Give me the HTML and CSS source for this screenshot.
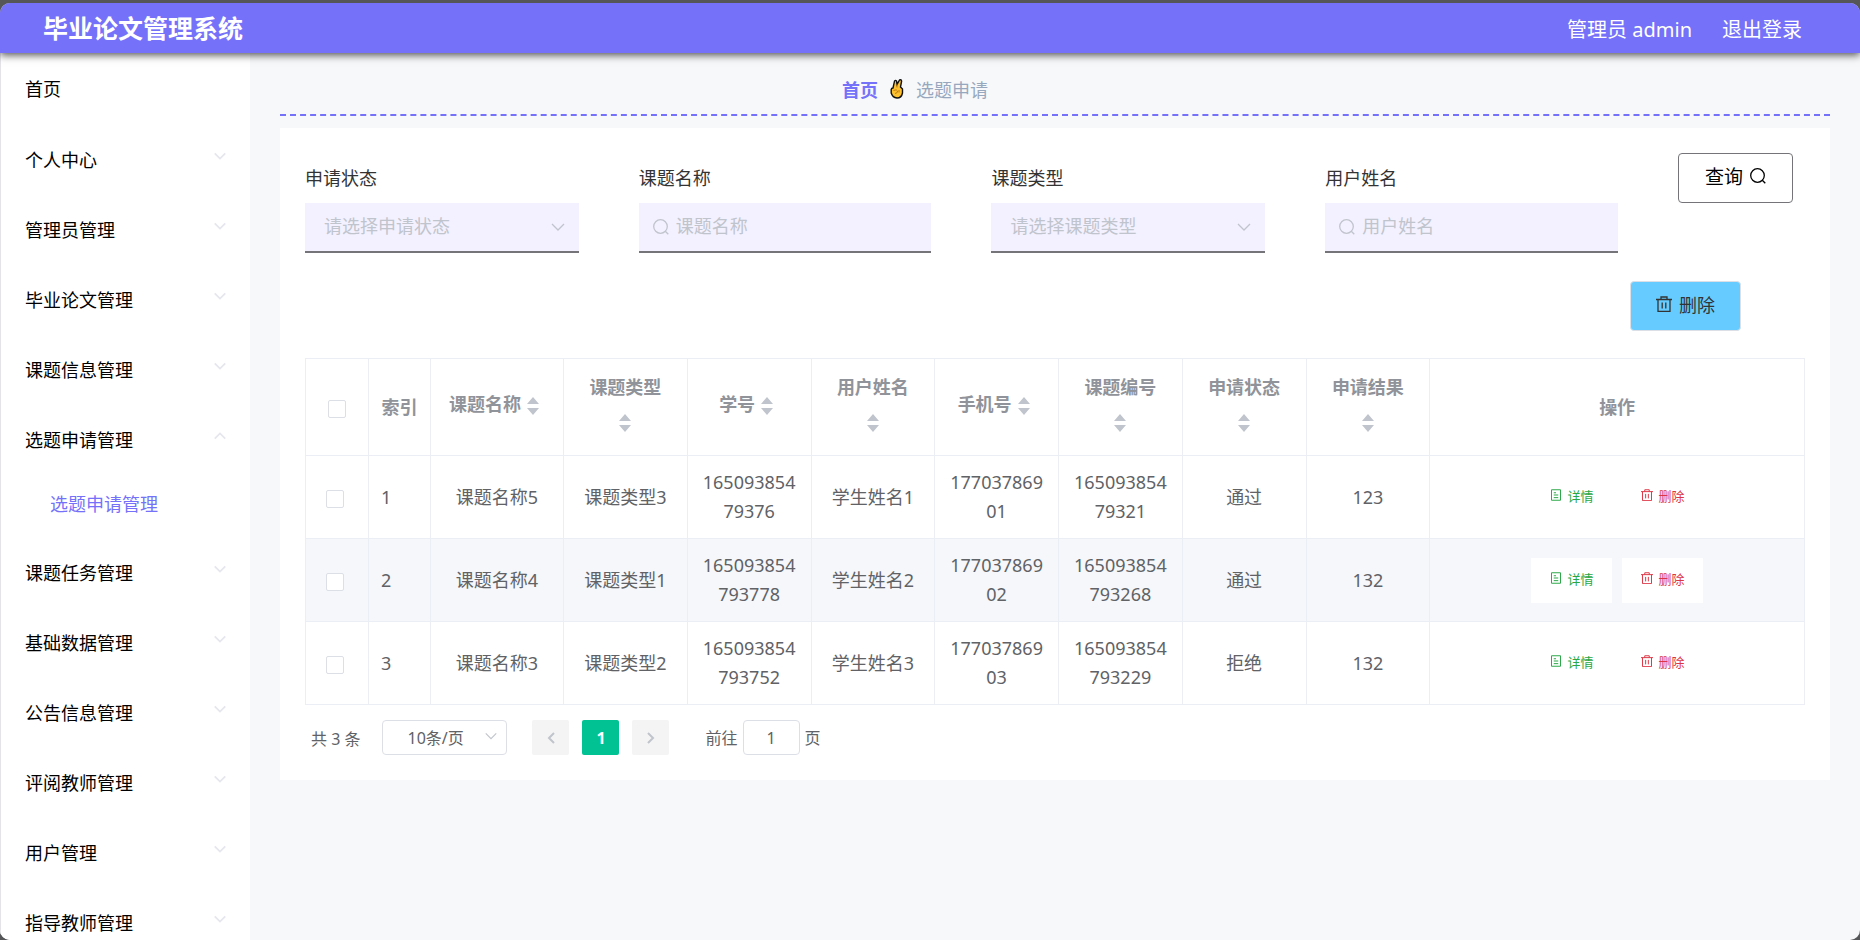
FILE: index.html
```
<!DOCTYPE html>
<html lang="zh-CN">
<head>
    <meta charset="UTF-8">
    <meta name="viewport" content="width=device-width, initial-scale=1.0">
    <title>毕业论文管理系统</title>
    <link rel="stylesheet" href="styles.css">
</head>
<body>
    <!-- 图标 -->
    <svg class="sprite" aria-hidden="true">
        <symbol id="i-down" viewBox="0 0 16 16"><path d="M2 5l6 6 6-6"/></symbol>
        <symbol id="i-up" viewBox="0 0 16 16"><path d="M2 11l6-6 6 6"/></symbol>
        <symbol id="i-left" viewBox="0 0 16 16"><path d="M11 3L6 8l5 5"/></symbol>
        <symbol id="i-right" viewBox="0 0 16 16"><path d="M5 3l5 5-5 5"/></symbol>
        <symbol id="i-search" viewBox="0 0 16 16"><circle cx="7.5" cy="7.5" r="6.8"/><path d="M12.3 12.3l3 3"/></symbol>
        <symbol id="i-trash" viewBox="0 0 16 16"><path d="M0 3.5h16M5 3.5v-2.500h6v2.500M2 3.500v12h12v-12M6.200 6.500v6M9.800 6.500v6"/></symbol>
        <symbol id="i-doc" viewBox="0 0 16 16"><path d="M2 1h12v14H2zM5 5h3M5 8h6M5 11.500h6"/></symbol>
        <symbol id="i-sort" viewBox="0 0 12 18"><path d="M6 0l6 7H0zM0 11h12l-6 7z"/></symbol>
    </svg>

    <div class="app">
        <header class="header">
            <h1>毕业论文管理系统</h1>
            <div class="user">
                <span>管理员 admin</span>
                <a href="#">退出登录</a>
            </div>
        </header>

        <div class="container">
            <!-- 左侧菜单 -->
            <nav class="sidebar">
                <a class="menu-item home" href="#">首页</a>
                <a class="menu-item" href="#">个人中心<svg><use href="#i-down"/></svg></a>
                <a class="menu-item" href="#">管理员管理<svg><use href="#i-down"/></svg></a>
                <a class="menu-item" href="#">毕业论文管理<svg><use href="#i-down"/></svg></a>
                <a class="menu-item" href="#">课题信息管理<svg><use href="#i-down"/></svg></a>
                <a class="menu-item" href="#">选题申请管理<svg><use href="#i-up"/></svg></a>
                <a class="submenu-item" href="#">选题申请管理</a>
                <a class="menu-item" href="#">课题任务管理<svg><use href="#i-down"/></svg></a>
                <a class="menu-item" href="#">基础数据管理<svg><use href="#i-down"/></svg></a>
                <a class="menu-item" href="#">公告信息管理<svg><use href="#i-down"/></svg></a>
                <a class="menu-item" href="#">评阅教师管理<svg><use href="#i-down"/></svg></a>
                <a class="menu-item" href="#">用户管理<svg><use href="#i-down"/></svg></a>
                <a class="menu-item" href="#">指导教师管理<svg><use href="#i-down"/></svg></a>
            </nav>

            <main class="main">
                <div class="breadcrumb">
                    <a href="#">首页</a>
                    <svg class="hand" viewBox="0 0 14 20">
                        <path d="M3 9L4.500 2.200Q5.500.6 6.600 2.200L7 5.500 9.500 1Q11.500.2 11.600 2.200L10.500 8 12.500 10V14Q11.500 19 7 19 2.500 18.600 1.200 14V10.500Q1.500 9 3 9z" fill="#fdc12f" stroke="#111" stroke-width="1.400"/>
                        <path d="M3.500 11.500Q7 10 7.500 12T5 14.500M7 5.500V8.500M9 11v2.500" fill="none" stroke="#c07a14"/>
                    </svg>
                    <span>选题申请</span>
                </div>

                <section class="card">
                    <!-- 查询条件 -->
                    <form class="search-form">
                        <div class="field">
                            <label for="status">申请状态</label>
                            <div class="control">
                                <select id="status"><option>请选择申请状态</option></select>
                                <svg class="arrow"><use href="#i-down"/></svg>
                            </div>
                        </div>
                        <div class="field">
                            <label for="topic">课题名称</label>
                            <div class="control">
                                <input id="topic" type="text" placeholder="课题名称">
                                <svg class="prefix"><use href="#i-search"/></svg>
                            </div>
                        </div>
                        <div class="field">
                            <label for="type">课题类型</label>
                            <div class="control">
                                <select id="type"><option>请选择课题类型</option></select>
                                <svg class="arrow"><use href="#i-down"/></svg>
                            </div>
                        </div>
                        <div class="field">
                            <label for="username">用户姓名</label>
                            <div class="control">
                                <input id="username" type="text" placeholder="用户姓名">
                                <svg class="prefix"><use href="#i-search"/></svg>
                            </div>
                        </div>
                        <button class="btn-search" type="button">查询<svg><use href="#i-search"/></svg></button>
                    </form>

                    <div class="toolbar">
                        <button class="btn-delete" type="button"><svg><use href="#i-trash"/></svg>删除</button>
                    </div>

                    <table class="table">
                        <colgroup>
                            <col class="c-check"><col class="c-index"><col class="c-name">
                            <col><col><col><col><col><col><col>
                            <col class="c-action">
                        </colgroup>
                        <thead>
                            <tr>
                                <th><input type="checkbox" aria-label="全选"></th>
                                <th>索引</th>
                                <th>课题名称<span class="sort"><svg><use href="#i-sort"/></svg></span></th>
                                <th>课题类型<span class="sort"><svg><use href="#i-sort"/></svg></span></th>
                                <th>学号<span class="sort"><svg><use href="#i-sort"/></svg></span></th>
                                <th>用户姓名<span class="sort"><svg><use href="#i-sort"/></svg></span></th>
                                <th>手机号<span class="sort"><svg><use href="#i-sort"/></svg></span></th>
                                <th>课题编号<span class="sort"><svg><use href="#i-sort"/></svg></span></th>
                                <th>申请状态<span class="sort"><svg><use href="#i-sort"/></svg></span></th>
                                <th>申请结果<span class="sort"><svg><use href="#i-sort"/></svg></span></th>
                                <th>操作</th>
                            </tr>
                        </thead>
                        <tbody>
                            <tr>
                                <td class="left check"><input type="checkbox" aria-label="选择第1行"></td>
                                <td class="left">1</td>
                                <td>课题名称5</td>
                                <td>课题类型3</td>
                                <td>16509385479376</td>
                                <td>学生姓名1</td>
                                <td>17703786901</td>
                                <td>16509385479321</td>
                                <td>通过</td>
                                <td>123</td>
                                <td>
                                    <div class="actions">
                                        <button class="detail" type="button"><svg><use href="#i-doc"/></svg>详情</button>
                                        <button class="remove" type="button"><svg><use href="#i-trash"/></svg>删除</button>
                                    </div>
                                </td>
                            </tr>
                            <tr>
                                <td class="left check"><input type="checkbox" aria-label="选择第2行"></td>
                                <td class="left">2</td>
                                <td>课题名称4</td>
                                <td>课题类型1</td>
                                <td>165093854793778</td>
                                <td>学生姓名2</td>
                                <td>17703786902</td>
                                <td>165093854793268</td>
                                <td>通过</td>
                                <td>132</td>
                                <td>
                                    <div class="actions">
                                        <button class="detail" type="button"><svg><use href="#i-doc"/></svg>详情</button>
                                        <button class="remove" type="button"><svg><use href="#i-trash"/></svg>删除</button>
                                    </div>
                                </td>
                            </tr>
                            <tr>
                                <td class="left check"><input type="checkbox" aria-label="选择第3行"></td>
                                <td class="left">3</td>
                                <td>课题名称3</td>
                                <td>课题类型2</td>
                                <td>165093854793752</td>
                                <td>学生姓名3</td>
                                <td>17703786903</td>
                                <td>165093854793229</td>
                                <td>拒绝</td>
                                <td>132</td>
                                <td>
                                    <div class="actions">
                                        <button class="detail" type="button"><svg><use href="#i-doc"/></svg>详情</button>
                                        <button class="remove" type="button"><svg><use href="#i-trash"/></svg>删除</button>
                                    </div>
                                </td>
                            </tr>
                        </tbody>
                    </table>

                    <!-- 分页 -->
                    <div class="pagination">
                        <span class="total">共 3 条</span>
                        <div class="page-size">
                            <select aria-label="每页条数"><option>10条/页</option></select>
                            <svg class="arrow"><use href="#i-down"/></svg>
                        </div>
                        <div class="pager">
                            <button type="button" aria-label="上一页"><svg><use href="#i-left"/></svg></button>
                            <button class="active" type="button">1</button>
                            <button type="button" aria-label="下一页"><svg><use href="#i-right"/></svg></button>
                        </div>
                        <label class="jump">前往<input type="text" value="1">页</label>
                    </div>
                </section>
            </main>
        </div>
    </div>
</body>
</html>
```
FILE: styles.css
```
* {
    box-sizing: border-box;
}
body {
    margin: 0;
    padding-top: 3px;
    background: #555658;
    font-family: "Noto Sans", "Noto Sans CJK SC", sans-serif;
    font-size: 18px;
    color: #606266;
}
a {
    text-decoration: none;
    color: inherit;
}
button, input, select {
    font-family: inherit;
    margin: 0;
}
button {
    cursor: pointer;
}
svg {
    fill: none;
    stroke: currentColor;
    flex-shrink: 0;
}
.sprite {
    display: none;
}
.app {
    display: flex;
    flex-direction: column;
    height: calc(100vh - 3px);
    border-radius: 10px;
    overflow: hidden;
    background: #f7f8fa;
}

/* 顶部 */
.header {
    position: relative;
    z-index: 1;
    display: flex;
    align-items: center;
    justify-content: space-between;
    flex-shrink: 0;
    height: 50px;
    padding: 0 58px 0 43px;
    background: #7571f9;
    color: #fff;
    box-shadow: 0 2px 8px rgba(0, 0, 0, 0.7);
}
.header h1 {
    margin: 0;
    font-size: 25px;
    line-height: 50px;
}
.user {
    display: flex;
    gap: 30px;
    font-size: 20px;
}
.container {
    display: flex;
    flex: 1;
    min-height: 0;
}

/* 左侧菜单 */
.sidebar {
    width: 250px;
    flex-shrink: 0;
    overflow: hidden;
    background: #fff;
    border-left: 1px solid #e4e4e8;
    color: #000;
}
.menu-item {
    display: flex;
    align-items: center;
    justify-content: space-between;
    height: 70px;
    padding: 0 23px 0 24px;
}
.menu-item svg {
    width: 14px;
    height: 14px;
    margin-bottom: 6px;
    stroke-width: 2;
    color: #e6e6ee;
}
.home {
    margin-bottom: 1px;
}
.submenu-item {
    display: flex;
    align-items: center;
    height: 58px;
    margin-bottom: 5px;
    padding-left: 49px;
    color: #7571f9;
}

/* 内容 */
.main {
    flex: 1;
    min-width: 0;
    padding: 0 30px;
}
.breadcrumb {
    display: flex;
    align-items: center;
    justify-content: center;
    gap: 12px;
    height: 63px;
    padding: 10px 280px 0 0;
    margin-bottom: 12px;
    border-bottom: 2px dashed #7571f9;
    color: #97a8be;
}
.breadcrumb a {
    color: #7571f9;
    font-weight: bold;
}
.hand {
    width: 14px;
    height: 20px;
}
.card {
    padding: 25px;
    background: #fff;
}

/* 查询表单 */
.search-form {
    display: grid;
    grid-template-columns: 274fr 293fr 274fr 293fr auto;
    column-gap: 60px;
    align-items: start;
    padding-right: 12px;
}
.field label {
    display: block;
    line-height: 50px;
    color: #333;
}
.control {
    position: relative;
}
.control input, .control select {
    display: block;
    width: 100%;
    height: 50px;
    border: 0;
    border-bottom: 2px solid #757579;
    border-radius: 0;
    background: #f3f1ff;
    font-size: 18px;
    color: #c0c4cc;
    outline: none;
    appearance: none;
}
.control select {
    padding: 0 40px 2px 19px;
}
.control input {
    padding: 0 12px 2px 37px;
}
.control input::placeholder {
    color: #c0c4cc;
}
.arrow, .prefix {
    position: absolute;
    top: 50%;
    width: 16px;
    height: 16px;
    margin-top: -9px;
    stroke-width: 1.3;
    color: #c0c4cc;
    pointer-events: none;
}
.arrow {
    right: 13px;
}
.prefix {
    left: 14px;
}
.btn-search, .btn-delete {
    display: flex;
    align-items: center;
    justify-content: center;
    height: 50px;
    padding-bottom: 6px;
    border-radius: 4px;
}
.btn-search {
    width: 115px;
    gap: 7px;
    border: 1px solid #757579;
    background: #fff;
    font-size: 19px;
    color: #000;
}
.btn-search svg, .btn-delete svg {
    width: 16px;
    height: 16px;
    stroke-width: 1.3;
}
.toolbar {
    display: flex;
    justify-content: flex-end;
    margin: 28px 64px 27px 0;
}
.btn-delete {
    width: 111px;
    gap: 7px;
    border: 1px solid #dcdfe6;
    background: #66ccff;
    font-size: 18px;
    color: #333;
}

/* 表格 */
.table {
    width: 100%;
    table-layout: fixed;
    border-collapse: collapse;
    text-align: center;
}
.table th, .table td {
    border: 1px solid #ebeef5;
}
.table th {
    height: 97px;
    padding: 10px 15px 14px;
    line-height: 34px;
    color: #909399;
}
.table th:nth-child(-n+2), .table th:last-child {
    padding: 12px 0;
}
.table td {
    height: 83px;
    padding: 12px;
    line-height: 29px;
    word-break: break-all;
}
.table .left {
    text-align: left;
}
.table .check {
    padding-left: 20px;
}
.table tbody tr:nth-child(even) {
    background: #f5f7fa;
}
.c-check {
    width: 63px;
}
.c-index {
    width: 62px;
}
.c-name {
    width: 133px;
}
.c-action {
    width: 25%;
}
.sort {
    display: inline-flex;
    align-items: center;
    justify-content: center;
    width: 24px;
    height: 34px;
    vertical-align: middle;
}
.sort svg {
    width: 12px;
    height: 18px;
    fill: #c0c4cc;
    stroke: none;
}
input[type="checkbox"] {
    display: inline-block;
    width: 18px;
    height: 18px;
    border: 1px solid #dcdfe6;
    border-radius: 2px;
    background: #fff;
    vertical-align: middle;
    appearance: none;
}
.actions {
    display: flex;
    justify-content: center;
    gap: 10px;
}
.actions button {
    display: flex;
    align-items: center;
    justify-content: center;
    gap: 6px;
    width: 81px;
    height: 45px;
    padding: 0 0 4px;
    border: 0;
    background: #fff;
    font-size: 13px;
}
.actions svg {
    width: 12px;
    height: 12px;
    stroke-width: 1.3;
}
.actions .detail {
    color: #28a745;
}
.actions .remove {
    color: #dc3545;
}

/* 分页 */
.pagination {
    display: flex;
    align-items: center;
    height: 35px;
    margin-top: 15px;
    padding-left: 6px;
    font-size: 16px;
}
.page-size {
    position: relative;
    margin: 0 25px 0 22px;
}
.page-size select {
    width: 125px;
    height: 35px;
    padding: 0 0 0 24px;
    border: 1px solid #dcdfe6;
    border-radius: 4px;
    background: #fff;
    font-size: 16px;
    color: #606266;
    appearance: none;
}
.page-size .arrow {
    right: 9px;
    width: 14px;
    height: 14px;
}
.pager {
    display: flex;
    gap: 13px;
}
.pager button {
    display: flex;
    align-items: center;
    justify-content: center;
    width: 37px;
    height: 35px;
    padding: 0;
    border: 0;
    border-radius: 2px;
    background: #f4f4f5;
    font-size: 16px;
    font-weight: bold;
    color: #c0c4cc;
}
.pager svg {
    width: 16px;
    height: 16px;
    stroke-width: 2;
}
.pager .active {
    background: #00c292;
    color: #fff;
}
.jump {
    margin-left: 36px;
}
.jump input {
    width: 57px;
    height: 35px;
    margin: 0 5px;
    border: 1px solid #dcdfe6;
    border-radius: 4px;
    font-size: 16px;
    color: #606266;
    text-align: center;
}
```
